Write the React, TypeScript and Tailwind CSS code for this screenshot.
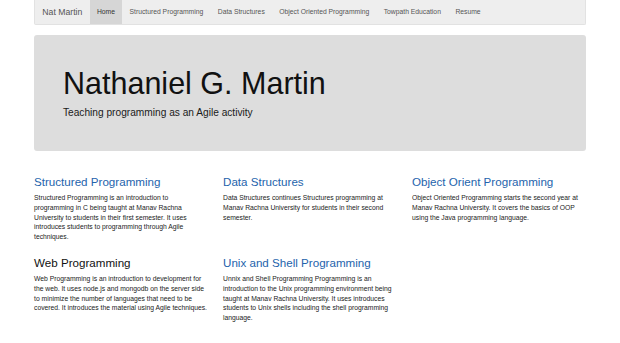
const navItems = ['Home', 'Structured Programming', 'Data Structures', 'Object Oriented Programming', 'Towpath Education', 'Resume']

const courses = [
  {
    title: 'Structured Programming',
    link: true,
    text: 'Structured Programming is an introduction to programming in C being taught at Manav Rachna University to students in their first semester. It uses introduces students to programming through Agile techniques.',
  },
  {
    title: 'Data Structures',
    link: true,
    text: 'Data Structures continues Structures programming at Manav Rachna University for students in their second semester.',
  },
  {
    title: 'Object Orient Programming',
    link: true,
    text: 'Object Oriented Programming starts the second year at Manav Rachna University. It covers the basics of OOP using the Java programming language.',
  },
  {
    title: 'Web Programming',
    link: false,
    text: 'Web Programming is an introduction to development for the web. It uses node.js and mongodb on the server side to minimize the number of languages that need to be covered. It introduces the material using Agile techniques.',
  },
  {
    title: 'Unix and Shell Programming',
    link: true,
    text: 'Unnix and Shell Programming Programming is an introduction to the Unix programming environment being taught at Manav Rachna University. It uses introduces students to Unix shells including the shell programming language.',
  },
]

export default function App() {
  return (
    <div className="min-h-[343px] bg-white text-[#222] font-['Liberation_Sans',Arial,sans-serif]">
      {/* navbar */}
      <nav className="mx-[34px] w-[552px] h-[24.5px] bg-[#eeeeee] border-x border-b border-[#e2e2e2] rounded-b-[2px] flex items-stretch">
        <div className="px-[7.3px] text-[8.7px] leading-[24px] text-[#555]">Nat Martin</div>
        <div className="flex">
          {navItems.map((item) => {
            const active = item === 'Home'
            return (
              <div
                key={item}
                className={`px-[7.27px] text-[6.78px] leading-[24px] ${active ? 'bg-[#d6d6d6] text-[#333]' : 'text-[#555]'}`}
              >
                {item}
              </div>
            )
          })}
        </div>
      </nav>

      {/* jumbotron */}
      <div className="mx-[34px] mt-[10px] w-[552px] bg-[#dddddd] rounded-[3px] px-[29px] py-[23.25px]">
        <h1 className="mt-[9.7px] mb-[4.8px] text-[30.5px] leading-[33.6px] text-[#111]">Nathaniel G. Martin</h1>
        <p className="mb-[7.3px] text-[10.17px] leading-[14.5px] text-[#1a1a1a]">Teaching programming as an Agile activity</p>
      </div>

      {/* courses */}
      <div className="mx-[34px] mt-[14.5px] w-[552.5px] grid grid-cols-3 gap-x-[14.5px]">
        {courses.map((c) => (
          <div key={c.title}>
            <h3 className={`mt-[10.2px] mb-[4.8px] text-[11.62px] leading-[12.8px] ${c.link ? 'text-[#2463ac]' : 'text-[#111]'}`}>
              {c.title}
            </h3>
            <p className="mb-[4.8px] text-[6.78px] leading-[9.69px] text-[#222]">{c.text}</p>
          </div>
        ))}
      </div>
    </div>
  )
}
